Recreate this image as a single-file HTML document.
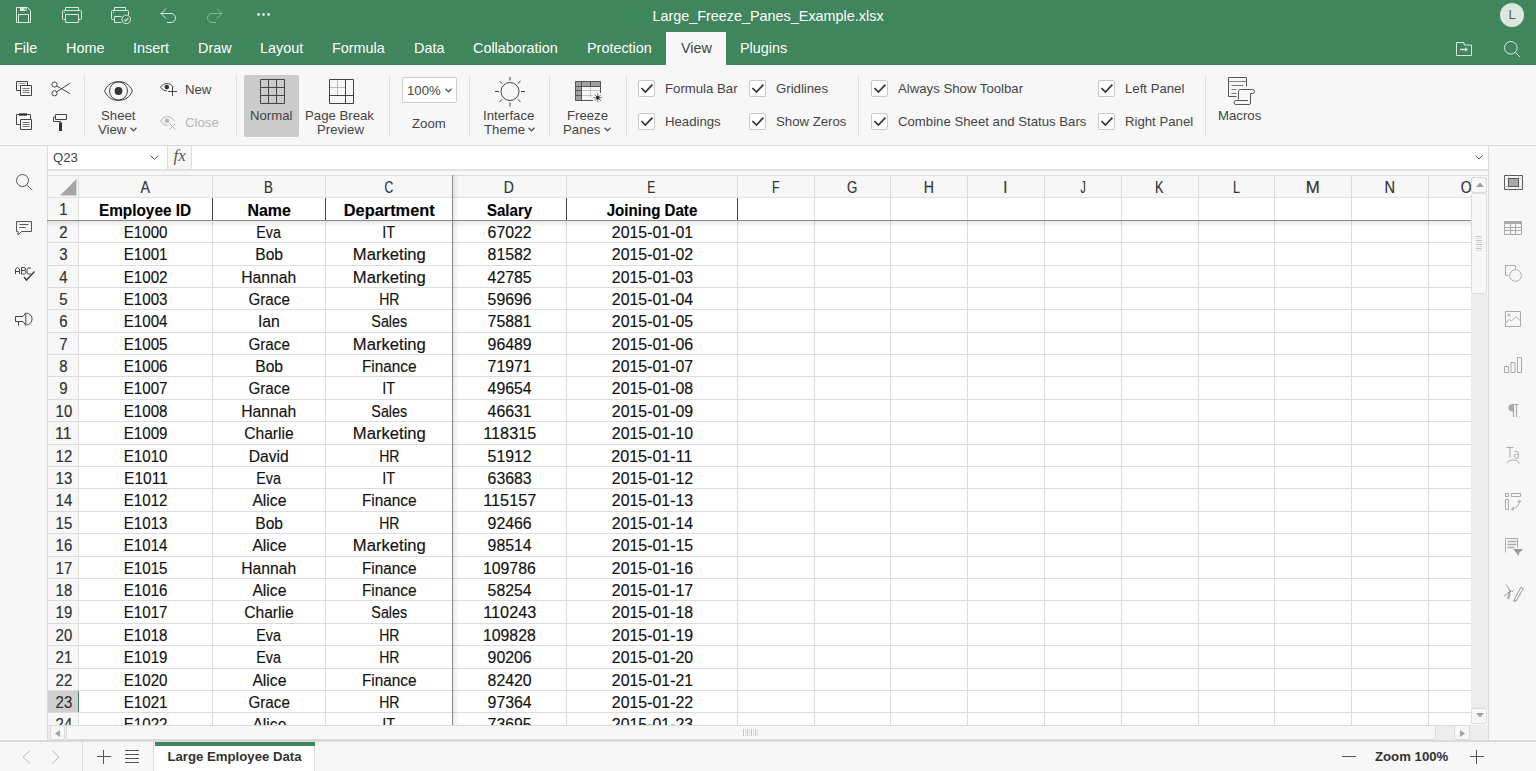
<!DOCTYPE html>
<html><head><meta charset="utf-8">
<style>
*{margin:0;padding:0;box-sizing:border-box}
html,body{width:1536px;height:771px;overflow:hidden;background:#f7f7f7;font-family:"Liberation Sans",sans-serif;color:#444}
.a{position:absolute}
.t{position:absolute;white-space:nowrap;font-size:13.2px;line-height:17px;color:#444}
.tab{position:absolute;white-space:nowrap;font-size:14.4px;line-height:18px;color:#fff;top:39px}
.sep{position:absolute;top:75px;width:1px;height:62px;background:#dfdfdf}
.cb{position:absolute;width:17px;height:17px;border:1px solid #c9c9c9;border-radius:2px;background:#fff}
.cb svg{position:absolute;left:1px;top:1px}
.hl{position:absolute;left:47px;width:1424px;height:1px;background:#dcdcdc}
.vl{position:absolute;top:175px;width:1px;height:550px;background:#dcdcdc}
.ct{position:absolute;width:120px;text-align:center;white-space:nowrap;font-size:17px;color:#111;-webkit-text-stroke:0.15px #111}
.ct span{display:inline-block}
.b{font-weight:bold;color:#000}
svg{position:absolute;overflow:visible}
</style></head><body>
<!-- header -->
<div class="a" style="left:0;top:0;width:1536px;height:65px;background:#40865c"></div>
<div class="a" style="left:666px;top:32px;width:60px;height:33px;background:#f7f7f7"></div>
<div class="t" style="left:0;width:1536px;text-align:center;top:7px;font-size:14.4px;line-height:18px;color:#fff">Large_Freeze_Panes_Example.xlsx</div>
<div class="tab" style="left:14px">File</div>
<div class="tab" style="left:66px">Home</div>
<div class="tab" style="left:133px">Insert</div>
<div class="tab" style="left:198px">Draw</div>
<div class="tab" style="left:260px">Layout</div>
<div class="tab" style="left:332px">Formula</div>
<div class="tab" style="left:414px">Data</div>
<div class="tab" style="left:473px">Collaboration</div>
<div class="tab" style="left:587px">Protection</div>
<div class="tab" style="left:681px;color:#444">View</div>
<div class="tab" style="left:740px">Plugins</div>
<!-- quick access icons -->
<svg style="left:16px;top:7px" width="16" height="16" viewBox="0 0 16 16" fill="none" stroke="rgba(255,255,255,0.8)"><path d="M0.5 0.5H11.5L14.5 3.5V15.5H0.5Z"/><path d="M2.5 15.5V7.5H12.5V15.5"/><path d="M4 0.5h6.5v3.5h-6.5z" fill="rgba(255,255,255,0.8)" stroke="none"/><path d="M9 1.2v2" stroke="#40865c"/></svg>
<svg style="left:62px;top:7px" width="20" height="16" viewBox="0 0 20 16" fill="none" stroke="rgba(255,255,255,0.8)"><path d="M3.5 3.5V0.5H16.5V3.5"/><path d="M3.5 12.5H1.5A1 1 0 0 1 0.5 11.5V4.5A1 1 0 0 1 1.5 3.5H18.5A1 1 0 0 1 19.5 4.5V11.5A1 1 0 0 1 18.5 12.5H16.5"/><path d="M3.5 7.5H16.5V15.5H3.5Z"/><circle cx="2.5" cy="5.5" r="0.5" fill="#fff" stroke="none"/></svg>
<svg style="left:111px;top:7px" width="20" height="17" viewBox="0 0 20 17" fill="none" stroke="rgba(255,255,255,0.8)"><path d="M3.5 3.5V0.5H14.5V3.5"/><path d="M3.5 12.5H1.5a1 1 0 0 1-1-1V4.5a1 1 0 0 1 1-1H16.5a1 1 0 0 1 1 1V8"/><path d="M10.5 9.5H3.5V15.5H10.5"/><circle cx="2.5" cy="5.5" r="0.5" fill="#fff" stroke="none"/><circle cx="15.2" cy="12.4" r="4.3"/><path d="M13.2 12.5l1.5 1.5 2.6-2.8" stroke-width="1.2"/></svg>
<svg style="left:160px;top:8px" width="16" height="16" viewBox="0 0 16 16" fill="none" stroke="rgba(255,255,255,0.8)"><path d="M6 0.5L1 5.5L6 10.5"/><path d="M1 5.5H11A4.5 4.5 0 0 1 11 14.5H7"/></svg>
<svg style="left:208px;top:8px" width="16" height="16" viewBox="0 0 16 16" fill="none" stroke="rgba(255,255,255,0.38)"><path d="M9 0.5L14 5.5L9 10.5"/><path d="M14 5.5H4A4.5 4.5 0 0 0 4 14.5H8"/></svg>
<svg style="left:257px;top:12px" width="14" height="5" viewBox="0 0 14 5" fill="rgba(255,255,255,0.85)"><circle cx="1.5" cy="2.5" r="1.4"/><circle cx="6.5" cy="2.5" r="1.4"/><circle cx="11.5" cy="2.5" r="1.4"/></svg>
<div class="a" style="left:1500px;top:3px;width:24px;height:24px;border-radius:12px;background:#dce7df;color:#4d5e53;font-size:13px;line-height:24px;text-align:center">L</div>
<svg style="left:1456px;top:42px" width="16" height="14" viewBox="0 0 16 14" fill="none" stroke="rgba(255,255,255,0.8)"><path d="M0.5 0.5h7.5v2.5h7.5v10.5h-15z"/><path d="M4 7.5h5" stroke-width="1.5"/><path d="M9 5.2l3 2.3-3 2.3z" fill="rgba(255,255,255,0.8)" stroke="none"/></svg>
<svg style="left:1504px;top:41px" width="17" height="17" viewBox="0 0 17 17" fill="none" stroke="rgba(255,255,255,0.8)"><circle cx="6.8" cy="6.8" r="6.3"/><path d="M11.3 11.3l4.8 4.8"/></svg>

<!-- toolbar -->
<div class="a" style="left:0;top:145px;width:1536px;height:1px;background:#dcdcdc"></div>
<div class="sep" style="left:84px"></div>
<div class="sep" style="left:236px"></div>
<div class="sep" style="left:389px"></div>
<div class="sep" style="left:469px"></div>
<div class="sep" style="left:549px"></div>
<div class="sep" style="left:626px"></div>
<div class="sep" style="left:858px"></div>
<div class="sep" style="left:1205px"></div>
<!-- copy -->
<svg style="left:16px;top:81px" width="17" height="16" viewBox="0 0 17 16" fill="none" stroke="#444"><path d="M4 9.5H0.5V0.5H11.5V4"/><path d="M2.5 2.5H9.5M2.5 4.5H3.5" stroke="#999"/><path d="M4.5 4.5H15.5V14.5H4.5Z"/><path d="M6.5 7.5H13.5M6.5 9.5H13.5M6.5 11.5H13.5" stroke="#777"/></svg>
<!-- paste -->
<svg style="left:16px;top:113px" width="17" height="17" viewBox="0 0 17 17" fill="none" stroke="#444"><path d="M4 11.5H0.5V1.5H14.5V6"/><path d="M3 0.3h8v2.4h-8z" fill="#333" stroke="none"/><path d="M4.5 6.5H15.5V16.5H4.5Z"/><path d="M6.5 9.5H13.5M6.5 11.5H13.5M6.5 13.5H13.5" stroke="#777"/></svg>
<!-- scissors -->
<svg style="left:51px;top:81px" width="20" height="15" viewBox="0 0 20 15" fill="none" stroke="#444"><circle cx="3.5" cy="3.5" r="2.6"/><circle cx="3.5" cy="12.3" r="2.6"/><path d="M5.8 5L19 12.7M5.8 10.8L19 2.2"/></svg>
<!-- format painter -->
<svg style="left:53px;top:114px" width="15" height="17" viewBox="0 0 15 17" fill="none" stroke="#444"><path d="M2.5 0.5H13.5V5.5H2.5Z"/><path d="M2.5 3H0.5V7.5H7.5V8.5"/><path d="M6 8.5h3v8.5h-3z" fill="#333" stroke="none"/></svg>
<!-- sheet view eye -->
<svg style="left:104px;top:81px" width="30" height="20" viewBox="0 0 30 20" fill="none" stroke="#444"><path d="M0.6 10C3 4 8 0.6 14.5 0.6S26 4 28.4 10C26 16 21 19.4 14.5 19.4S3 16 0.6 10z"/><circle cx="14.5" cy="10" r="9"/><circle cx="14.5" cy="10" r="3.9" fill="#333" stroke="none"/></svg>
<div class="t" style="left:101px;top:107px">Sheet</div>
<div class="t" style="left:98px;top:121px">View</div>
<svg style="left:130px;top:127px" width="7" height="5" viewBox="0 0 7 5" fill="none" stroke="#555" stroke-width="1.3"><path d="M0.5 0.8l3 3 3-3"/></svg>
<!-- new view -->
<svg style="left:160px;top:83px" width="18" height="14" viewBox="0 0 18 14" fill="none" stroke="#444"><path d="M0.5 4.2C2.3 1.8 4.5 0.5 7 0.5S11.7 1.8 13.5 4.2"/><path d="M0.5 4.2C2.3 6.6 4.5 7.9 7 7.9"/><circle cx="6.8" cy="4.1" r="2.3" fill="#333" stroke="none"/><path d="M12.5 4v9M8 8.5h9"/></svg>
<div class="t" style="left:185px;top:81px">New</div>
<svg style="left:160px;top:116px" width="18" height="14" viewBox="0 0 18 14" fill="none" stroke="#b5b5b5"><path d="M0.6 5C2.5 2 5 0.6 7.5 0.6S12.5 2 14.4 5"/><path d="M0.6 5C2.5 8 5 9.4 7.5 9.4"/><circle cx="7" cy="4.7" r="2.2" fill="#b5b5b5" stroke="none"/><path d="M9.5 7.5l6 6M15.5 7.5l-6 6"/></svg>
<div class="t" style="left:185px;top:114px;color:#b5b5b5">Close</div>
<!-- normal -->
<div class="a" style="left:244px;top:75px;width:55px;height:62px;background:#cbcbcb;border-radius:2px"></div>
<svg style="left:260px;top:79px" width="25" height="25" viewBox="0 0 25 25" fill="none" stroke="#444"><path d="M0.5 0.5h24v24h-24z"/><path d="M8.5 0.5v24M16.5 0.5v24M0.5 8.5h24M0.5 16.5h24"/></svg>
<div class="t" style="left:250px;top:107px">Normal</div>
<!-- page break -->
<svg style="left:329px;top:79px" width="25" height="25" viewBox="0 0 25 25" fill="none" stroke="#444"><path d="M8.5 0.5v16M0.5 8.5h16" stroke="#bbb"/><path d="M0.5 0.5h24v24h-24z"/><path d="M16.5 0.5v24M0.5 16.5h24"/></svg>
<div class="t" style="left:305px;top:107px">Page Break</div>
<div class="t" style="left:317px;top:121px">Preview</div>
<!-- zoom -->
<div class="a" style="left:402px;top:77px;width:55px;height:26px;background:#fff;border:1px solid #cfcfcf;border-radius:2px"></div>
<div class="t" style="left:407px;top:82px">100%</div>
<svg style="left:445px;top:88px" width="7" height="5" viewBox="0 0 7 5" fill="none" stroke="#555" stroke-width="1.3"><path d="M0.5 0.8l3 3 3-3"/></svg>
<div class="t" style="left:412px;top:115px">Zoom</div>
<!-- interface theme -->
<svg style="left:495px;top:77px" width="30" height="30" viewBox="0 0 30 30" fill="none" stroke="#444"><circle cx="15" cy="14.5" r="9"/><path d="M15 0v3.5M15 25.5v4M0 14.5h4M26 14.5h4M4.5 4l2.8 2.8M25.5 4l-2.8 2.8M4.5 25l2.8-2.8M25.5 25l-2.8-2.8"/></svg>
<div class="t" style="left:483px;top:107px">Interface</div>
<div class="t" style="left:484px;top:121px">Theme</div>
<svg style="left:528px;top:127px" width="7" height="5" viewBox="0 0 7 5" fill="none" stroke="#555" stroke-width="1.3"><path d="M0.5 0.8l3 3 3-3"/></svg>
<!-- freeze panes -->
<svg style="left:575px;top:81px" width="27" height="22" viewBox="0 0 27 22" fill="none" stroke="#444"><path d="M0.5 0.5H25.5V5.5H0.5Z" fill="#a0a0a0" stroke="none"/><path d="M0.5 5.5H6.5V19.5H0.5Z" fill="#a0a0a0" stroke="none"/><path d="M6.5 9.5H25M6.5 14.5H18M15.5 5.5V16" stroke="#c4c4c4"/><path d="M0.5 11V0.5H25.5V12M0.5 11V19.5H18M0.5 5.5H25.5M6.5 0.5V19.5M15.5 0.5V5.5M0.5 9.5H6.5M0.5 14.5H6.5" stroke="#555"/><path d="M22.8 12.3v9M18.3 16.8h9M19.6 13.6l6.4 6.4M26 13.6l-6.4 6.4" stroke="#777"/><circle cx="22.8" cy="16.8" r="1.8" fill="#222" stroke="none"/></svg>
<div class="t" style="left:567px;top:107px">Freeze</div>
<div class="t" style="left:563px;top:121px">Panes</div>
<svg style="left:604px;top:127px" width="7" height="5" viewBox="0 0 7 5" fill="none" stroke="#555" stroke-width="1.3"><path d="M0.5 0.8l3 3 3-3"/></svg>
<!-- checkboxes -->
<div class="cb" style="left:638px;top:80px"><svg width="15" height="15" viewBox="0 0 15 15" fill="none" stroke="#333" stroke-width="1.7"><path d="M1.4 6L5.4 10L12.4 2.6"/></svg></div>
<div class="t" style="left:665px;top:80px">Formula Bar</div>
<div class="cb" style="left:638px;top:113px"><svg width="15" height="15" viewBox="0 0 15 15" fill="none" stroke="#333" stroke-width="1.7"><path d="M1.4 6L5.4 10L12.4 2.6"/></svg></div>
<div class="t" style="left:665px;top:113px">Headings</div>
<div class="cb" style="left:749px;top:80px"><svg width="15" height="15" viewBox="0 0 15 15" fill="none" stroke="#333" stroke-width="1.7"><path d="M1.4 6L5.4 10L12.4 2.6"/></svg></div>
<div class="t" style="left:776px;top:80px">Gridlines</div>
<div class="cb" style="left:749px;top:113px"><svg width="15" height="15" viewBox="0 0 15 15" fill="none" stroke="#333" stroke-width="1.7"><path d="M1.4 6L5.4 10L12.4 2.6"/></svg></div>
<div class="t" style="left:776px;top:113px">Show Zeros</div>
<div class="cb" style="left:871px;top:80px"><svg width="15" height="15" viewBox="0 0 15 15" fill="none" stroke="#333" stroke-width="1.7"><path d="M1.4 6L5.4 10L12.4 2.6"/></svg></div>
<div class="t" style="left:898px;top:80px">Always Show Toolbar</div>
<div class="cb" style="left:871px;top:113px"><svg width="15" height="15" viewBox="0 0 15 15" fill="none" stroke="#333" stroke-width="1.7"><path d="M1.4 6L5.4 10L12.4 2.6"/></svg></div>
<div class="t" style="left:898px;top:113px">Combine Sheet and Status Bars</div>
<div class="cb" style="left:1098px;top:80px"><svg width="15" height="15" viewBox="0 0 15 15" fill="none" stroke="#333" stroke-width="1.7"><path d="M1.4 6L5.4 10L12.4 2.6"/></svg></div>
<div class="t" style="left:1125px;top:80px">Left Panel</div>
<div class="cb" style="left:1098px;top:113px"><svg width="15" height="15" viewBox="0 0 15 15" fill="none" stroke="#333" stroke-width="1.7"><path d="M1.4 6L5.4 10L12.4 2.6"/></svg></div>
<div class="t" style="left:1125px;top:113px">Right Panel</div>
<!-- macros -->
<svg style="left:1228px;top:77px" width="28" height="28" viewBox="0 0 28 28" fill="none" stroke="#555"><path d="M8.5 19.5h-8v-19h18v9"/><path d="M0.5 4.5h18" stroke="#888"/><path d="M3.5 8.5h12M3.5 12.5h5M3.5 16.5h5" stroke="#777"/><path d="M10.5 22.5v-8a2 2 0 0 1 2-2h12a2 2 0 0 1 0 4h-2v9.5a1.5 1.5 0 0 1-1.5 1.5h-13a2 2 0 0 1 0-4h12" fill="#f7f7f7"/></svg>
<div class="t" style="left:1218px;top:107px">Macros</div>


<!-- formula bar -->
<div class="a" style="left:47px;top:146px;width:1441px;height:23px;background:#fff"></div>
<div class="a" style="left:167px;top:146px;width:25px;height:23px;background:#f7f7f7;border-left:1px solid #dcdcdc;border-right:1px solid #dcdcdc"></div>
<div class="a" style="left:47px;top:169px;width:1441px;height:2px;background:#e2e2e2"></div>
<div class="t" style="left:53px;top:150px;line-height:16px">Q23</div>
<svg style="left:150px;top:155px" width="9" height="6" viewBox="0 0 9 6" fill="none" stroke="#555"><path d="M0.5 0.5l4 4 4-4"/></svg>
<div class="a" style="left:173.5px;top:146px;font-family:'Liberation Serif',serif;font-style:italic;font-size:17px;line-height:20px;color:#555">fx</div>
<svg style="left:1475px;top:155px" width="8" height="5" viewBox="0 0 8 5" fill="none" stroke="#555"><path d="M0.5 0.5l3.5 3.5 3.5-3.5"/></svg>

<!-- left panel -->
<div class="a" style="left:47px;top:146px;width:1px;height:595px;background:#dcdcdc"></div>
<svg style="left:16px;top:174px" width="17" height="17" viewBox="0 0 17 17" fill="none" stroke="#555"><circle cx="6.5" cy="6.5" r="6"/><path d="M10.8 10.8l5.5 5.5"/></svg>
<svg style="left:16px;top:221px" width="17" height="15" viewBox="0 0 17 15" fill="none" stroke="#555"><path d="M0.5 0.5h15v10h-10l-3.5 3.5v-3.5h-1.5z"/><path d="M3.5 3.5h9M3.5 6.5h6"/></svg>
<svg style="left:15px;top:267px" width="20" height="15" viewBox="0 0 20 15" fill="none" stroke="#444"><path d="M0.5 7v-5l2-1.5 2 1.5v5M0.5 4.5h4M6.5 7v-6.5h2.5a1.5 1.5 0 0 1 0 3h-2.5M6.5 3.5h3a1.8 1.8 0 0 1 0 3.5h-3M16 1h-2.5a1.5 1.5 0 0 0-1.5 1.5v3a1.5 1.5 0 0 0 1.5 1.5h2.5"/><path d="M9 10l2.5 3 8-8.5" stroke-width="1.5"/></svg>
<svg style="left:15px;top:312px" width="18" height="15" viewBox="0 0 18 15" fill="none" stroke="#444"><path d="M0.5 4.5H8L10.8 0.8V13.4L8 9.5H0.5Z"/><path d="M3.5 9.5V13.5"/><path d="M11.5 1.2A5.6 5.8 0 0 1 11.5 12.8" stroke="#555"/></svg>


<!-- grid -->
<div class="a" style="left:0;top:0;width:1488px;height:725px;overflow:hidden">
<div style="position:absolute;left:47px;top:175px;width:1424px;height:22px;background:#f7f7f7"></div>
<div style="position:absolute;left:47px;top:197px;width:31px;height:528px;background:#f7f7f7"></div>
<div style="position:absolute;left:79px;top:198px;width:1392px;height:527px;background:#fff"></div>
<div style="position:absolute;left:48px;top:691px;width:30px;height:21px;background:#cfcfcf"></div>
<div class="hl" style="top:242px"></div>
<div class="hl" style="top:265px"></div>
<div class="hl" style="top:287px"></div>
<div class="hl" style="top:309px"></div>
<div class="hl" style="top:332px"></div>
<div class="hl" style="top:354px"></div>
<div class="hl" style="top:376px"></div>
<div class="hl" style="top:399px"></div>
<div class="hl" style="top:421px"></div>
<div class="hl" style="top:444px"></div>
<div class="hl" style="top:466px"></div>
<div class="hl" style="top:488px"></div>
<div class="hl" style="top:511px"></div>
<div class="hl" style="top:533px"></div>
<div class="hl" style="top:556px"></div>
<div class="hl" style="top:578px"></div>
<div class="hl" style="top:600px"></div>
<div class="hl" style="top:623px"></div>
<div class="hl" style="top:645px"></div>
<div class="hl" style="top:668px"></div>
<div class="hl" style="top:690px"></div>
<div class="hl" style="top:712px"></div>
<div style="position:absolute;left:47px;top:175px;width:1441px;height:1px;background:#dedede"></div>
<div style="position:absolute;left:47px;top:197px;width:1424px;height:1px;background:#e0e0e0"></div>
<div class="vl" style="left:78px"></div>
<div class="vl" style="left:212px"></div>
<div class="vl" style="left:325px"></div>
<div class="vl" style="left:566px"></div>
<div class="vl" style="left:737px"></div>
<div class="vl" style="left:814px"></div>
<div class="vl" style="left:890px"></div>
<div class="vl" style="left:967px"></div>
<div class="vl" style="left:1044px"></div>
<div class="vl" style="left:1121px"></div>
<div class="vl" style="left:1198px"></div>
<div class="vl" style="left:1274px"></div>
<div class="vl" style="left:1351px"></div>
<div class="vl" style="left:1428px"></div>
<div style="position:absolute;left:47px;top:175px;width:1px;height:550px;background:#dcdcdc"></div>
<div style="position:absolute;left:78px;top:691px;width:1px;height:21px;background:#40865c"></div>
<div style="position:absolute;left:212px;top:198px;width:1px;height:22px;background:#444"></div>
<div style="position:absolute;left:325px;top:198px;width:1px;height:22px;background:#444"></div>
<div style="position:absolute;left:566px;top:198px;width:1px;height:22px;background:#444"></div>
<div style="position:absolute;left:737px;top:198px;width:1px;height:22px;background:#444"></div>
<div style="position:absolute;left:47px;top:221px;width:1424px;height:6px;background:linear-gradient(rgba(0,0,0,0.09),rgba(0,0,0,0))"></div>
<div style="position:absolute;left:453px;top:175px;width:6px;height:550px;background:linear-gradient(90deg,rgba(0,0,0,0.09),rgba(0,0,0,0))"></div>
<div style="position:absolute;left:47px;top:220px;width:1424px;height:1px;background:#8a8a8a"></div>
<div style="position:absolute;left:452px;top:175px;width:1px;height:550px;background:#8a8a8a"></div>
<svg style="left:60px;top:179px" width="17" height="17" viewBox="0 0 17 17"><path d="M0 16.5L16.5 0V16.5z" fill="#a5a5a5"/></svg>
<div class="ct" style="left:85.00px;top:177px;height:21px;line-height:21px;color:#333;font-size:16px"><span style="transform:scaleX(0.888)">A</span></div>
<div class="ct" style="left:208.50px;top:177px;height:21px;line-height:21px;color:#333;font-size:16px"><span style="transform:scaleX(0.835)">B</span></div>
<div class="ct" style="left:328.50px;top:177px;height:21px;line-height:21px;color:#333;font-size:16px"><span style="transform:scaleX(0.756)">C</span></div>
<div class="ct" style="left:449.00px;top:177px;height:21px;line-height:21px;color:#333;font-size:16px"><span style="transform:scaleX(0.872)">D</span></div>
<div class="ct" style="left:591.50px;top:177px;height:21px;line-height:21px;color:#333;font-size:16px"><span style="transform:scaleX(0.749)">E</span></div>
<div class="ct" style="left:715.50px;top:177px;height:21px;line-height:21px;color:#333;font-size:16px"><span style="transform:scaleX(0.770)">F</span></div>
<div class="ct" style="left:792.00px;top:177px;height:21px;line-height:21px;color:#333;font-size:16px"><span style="transform:scaleX(0.830)">G</span></div>
<div class="ct" style="left:868.50px;top:177px;height:21px;line-height:21px;color:#333;font-size:16px"><span style="transform:scaleX(0.883)">H</span></div>
<div class="ct" style="left:945.50px;top:177px;height:21px;line-height:21px;color:#333;font-size:16px"><span style="transform:scaleX(0.928)">I</span></div>
<div class="ct" style="left:1022.50px;top:177px;height:21px;line-height:21px;color:#333;font-size:16px"><span style="transform:scaleX(0.653)">J</span></div>
<div class="ct" style="left:1099.50px;top:177px;height:21px;line-height:21px;color:#333;font-size:16px"><span style="transform:scaleX(0.797)">K</span></div>
<div class="ct" style="left:1176.00px;top:177px;height:21px;line-height:21px;color:#333;font-size:16px"><span style="transform:scaleX(0.774)">L</span></div>
<div class="ct" style="left:1252.50px;top:177px;height:21px;line-height:21px;color:#333;font-size:16px"><span style="transform:scaleX(1.051)">M</span></div>
<div class="ct" style="left:1329.50px;top:177px;height:21px;line-height:21px;color:#333;font-size:16px"><span style="transform:scaleX(0.915)">N</span></div>
<div class="ct" style="left:1406.50px;top:177px;height:21px;line-height:21px;color:#333;font-size:16px"><span style="transform:scaleX(0.871)">O</span></div>
<div class="ct" style="left:3.50px;top:199px;height:22px;line-height:22px;color:#333;font-size:16px"><span style="transform:scaleX(0.933)">1</span></div>
<div class="ct" style="left:3.50px;top:222px;height:22px;line-height:22px;color:#333;font-size:16px"><span style="transform:scaleX(0.933)">2</span></div>
<div class="ct" style="left:3.50px;top:244px;height:22px;line-height:22px;color:#333;font-size:16px"><span style="transform:scaleX(0.933)">3</span></div>
<div class="ct" style="left:3.50px;top:267px;height:22px;line-height:22px;color:#333;font-size:16px"><span style="transform:scaleX(0.933)">4</span></div>
<div class="ct" style="left:3.50px;top:289px;height:22px;line-height:22px;color:#333;font-size:16px"><span style="transform:scaleX(0.933)">5</span></div>
<div class="ct" style="left:3.50px;top:311px;height:22px;line-height:22px;color:#333;font-size:16px"><span style="transform:scaleX(0.933)">6</span></div>
<div class="ct" style="left:3.50px;top:334px;height:22px;line-height:22px;color:#333;font-size:16px"><span style="transform:scaleX(0.933)">7</span></div>
<div class="ct" style="left:3.50px;top:356px;height:22px;line-height:22px;color:#333;font-size:16px"><span style="transform:scaleX(0.933)">8</span></div>
<div class="ct" style="left:3.50px;top:378px;height:22px;line-height:22px;color:#333;font-size:16px"><span style="transform:scaleX(0.933)">9</span></div>
<div class="ct" style="left:3.50px;top:401px;height:22px;line-height:22px;color:#333;font-size:16px"><span style="transform:scaleX(0.933)">10</span></div>
<div class="ct" style="left:3.50px;top:423px;height:22px;line-height:22px;color:#333;font-size:16px"><span style="transform:scaleX(0.999)">11</span></div>
<div class="ct" style="left:3.50px;top:446px;height:22px;line-height:22px;color:#333;font-size:16px"><span style="transform:scaleX(0.933)">12</span></div>
<div class="ct" style="left:3.50px;top:468px;height:22px;line-height:22px;color:#333;font-size:16px"><span style="transform:scaleX(0.933)">13</span></div>
<div class="ct" style="left:3.50px;top:490px;height:22px;line-height:22px;color:#333;font-size:16px"><span style="transform:scaleX(0.933)">14</span></div>
<div class="ct" style="left:3.50px;top:513px;height:22px;line-height:22px;color:#333;font-size:16px"><span style="transform:scaleX(0.933)">15</span></div>
<div class="ct" style="left:3.50px;top:535px;height:22px;line-height:22px;color:#333;font-size:16px"><span style="transform:scaleX(0.933)">16</span></div>
<div class="ct" style="left:3.50px;top:558px;height:22px;line-height:22px;color:#333;font-size:16px"><span style="transform:scaleX(0.933)">17</span></div>
<div class="ct" style="left:3.50px;top:580px;height:22px;line-height:22px;color:#333;font-size:16px"><span style="transform:scaleX(0.933)">18</span></div>
<div class="ct" style="left:3.50px;top:602px;height:22px;line-height:22px;color:#333;font-size:16px"><span style="transform:scaleX(0.933)">19</span></div>
<div class="ct" style="left:3.50px;top:625px;height:22px;line-height:22px;color:#333;font-size:16px"><span style="transform:scaleX(0.933)">20</span></div>
<div class="ct" style="left:3.50px;top:647px;height:22px;line-height:22px;color:#333;font-size:16px"><span style="transform:scaleX(0.933)">21</span></div>
<div class="ct" style="left:3.50px;top:670px;height:22px;line-height:22px;color:#333;font-size:16px"><span style="transform:scaleX(0.933)">22</span></div>
<div class="ct" style="left:3.50px;top:692px;height:22px;line-height:22px;color:#333;font-size:16px"><span style="transform:scaleX(0.933)">23</span></div>
<div class="ct" style="left:3.50px;top:714px;height:22px;line-height:22px;color:#333;font-size:16px"><span style="transform:scaleX(0.933)">24</span></div>
<div class="ct b" style="left:85.50px;top:200px;height:22px;line-height:22px"><span style="transform:scaleX(0.903)">Employee ID</span></div>
<div class="ct b" style="left:209.00px;top:200px;height:22px;line-height:22px"><span style="transform:scaleX(0.937)">Name</span></div>
<div class="ct b" style="left:329.00px;top:200px;height:22px;line-height:22px"><span style="transform:scaleX(0.962)">Department</span></div>
<div class="ct b" style="left:449.50px;top:200px;height:22px;line-height:22px"><span style="transform:scaleX(0.886)">Salary</span></div>
<div class="ct b" style="left:592.00px;top:200px;height:22px;line-height:22px"><span style="transform:scaleX(0.888)">Joining Date</span></div>
<div class="ct" style="left:85.50px;top:222px;height:22px;line-height:22px"><span style="transform:scaleX(0.890)">E1000</span></div>
<div class="ct" style="left:209.00px;top:222px;height:22px;line-height:22px"><span style="transform:scaleX(0.843)">Eva</span></div>
<div class="ct" style="left:329.00px;top:222px;height:22px;line-height:22px"><span style="transform:scaleX(0.851)">IT</span></div>
<div class="ct" style="left:449.50px;top:222px;height:22px;line-height:22px"><span style="transform:scaleX(0.933)">67022</span></div>
<div class="ct" style="left:592.00px;top:222px;height:22px;line-height:22px"><span style="transform:scaleX(0.934)">2015-01-01</span></div>
<div class="ct" style="left:85.50px;top:244px;height:22px;line-height:22px"><span style="transform:scaleX(0.890)">E1001</span></div>
<div class="ct" style="left:209.00px;top:244px;height:22px;line-height:22px"><span style="transform:scaleX(0.918)">Bob</span></div>
<div class="ct" style="left:329.00px;top:244px;height:22px;line-height:22px"><span style="transform:scaleX(0.978)">Marketing</span></div>
<div class="ct" style="left:449.50px;top:244px;height:22px;line-height:22px"><span style="transform:scaleX(0.933)">81582</span></div>
<div class="ct" style="left:592.00px;top:244px;height:22px;line-height:22px"><span style="transform:scaleX(0.934)">2015-01-02</span></div>
<div class="ct" style="left:85.50px;top:267px;height:22px;line-height:22px"><span style="transform:scaleX(0.890)">E1002</span></div>
<div class="ct" style="left:209.00px;top:267px;height:22px;line-height:22px"><span style="transform:scaleX(0.923)">Hannah</span></div>
<div class="ct" style="left:329.00px;top:267px;height:22px;line-height:22px"><span style="transform:scaleX(0.978)">Marketing</span></div>
<div class="ct" style="left:449.50px;top:267px;height:22px;line-height:22px"><span style="transform:scaleX(0.933)">42785</span></div>
<div class="ct" style="left:592.00px;top:267px;height:22px;line-height:22px"><span style="transform:scaleX(0.934)">2015-01-03</span></div>
<div class="ct" style="left:85.50px;top:289px;height:22px;line-height:22px"><span style="transform:scaleX(0.890)">E1003</span></div>
<div class="ct" style="left:209.00px;top:289px;height:22px;line-height:22px"><span style="transform:scaleX(0.894)">Grace</span></div>
<div class="ct" style="left:329.00px;top:289px;height:22px;line-height:22px"><span style="transform:scaleX(0.826)">HR</span></div>
<div class="ct" style="left:449.50px;top:289px;height:22px;line-height:22px"><span style="transform:scaleX(0.933)">59696</span></div>
<div class="ct" style="left:592.00px;top:289px;height:22px;line-height:22px"><span style="transform:scaleX(0.934)">2015-01-04</span></div>
<div class="ct" style="left:85.50px;top:311px;height:22px;line-height:22px"><span style="transform:scaleX(0.890)">E1004</span></div>
<div class="ct" style="left:209.00px;top:311px;height:22px;line-height:22px"><span style="transform:scaleX(0.925)">Ian</span></div>
<div class="ct" style="left:329.00px;top:311px;height:22px;line-height:22px"><span style="transform:scaleX(0.842)">Sales</span></div>
<div class="ct" style="left:449.50px;top:311px;height:22px;line-height:22px"><span style="transform:scaleX(0.933)">75881</span></div>
<div class="ct" style="left:592.00px;top:311px;height:22px;line-height:22px"><span style="transform:scaleX(0.934)">2015-01-05</span></div>
<div class="ct" style="left:85.50px;top:334px;height:22px;line-height:22px"><span style="transform:scaleX(0.890)">E1005</span></div>
<div class="ct" style="left:209.00px;top:334px;height:22px;line-height:22px"><span style="transform:scaleX(0.894)">Grace</span></div>
<div class="ct" style="left:329.00px;top:334px;height:22px;line-height:22px"><span style="transform:scaleX(0.978)">Marketing</span></div>
<div class="ct" style="left:449.50px;top:334px;height:22px;line-height:22px"><span style="transform:scaleX(0.933)">96489</span></div>
<div class="ct" style="left:592.00px;top:334px;height:22px;line-height:22px"><span style="transform:scaleX(0.934)">2015-01-06</span></div>
<div class="ct" style="left:85.50px;top:356px;height:22px;line-height:22px"><span style="transform:scaleX(0.890)">E1006</span></div>
<div class="ct" style="left:209.00px;top:356px;height:22px;line-height:22px"><span style="transform:scaleX(0.918)">Bob</span></div>
<div class="ct" style="left:329.00px;top:356px;height:22px;line-height:22px"><span style="transform:scaleX(0.903)">Finance</span></div>
<div class="ct" style="left:449.50px;top:356px;height:22px;line-height:22px"><span style="transform:scaleX(0.933)">71971</span></div>
<div class="ct" style="left:592.00px;top:356px;height:22px;line-height:22px"><span style="transform:scaleX(0.934)">2015-01-07</span></div>
<div class="ct" style="left:85.50px;top:378px;height:22px;line-height:22px"><span style="transform:scaleX(0.890)">E1007</span></div>
<div class="ct" style="left:209.00px;top:378px;height:22px;line-height:22px"><span style="transform:scaleX(0.894)">Grace</span></div>
<div class="ct" style="left:329.00px;top:378px;height:22px;line-height:22px"><span style="transform:scaleX(0.851)">IT</span></div>
<div class="ct" style="left:449.50px;top:378px;height:22px;line-height:22px"><span style="transform:scaleX(0.933)">49654</span></div>
<div class="ct" style="left:592.00px;top:378px;height:22px;line-height:22px"><span style="transform:scaleX(0.934)">2015-01-08</span></div>
<div class="ct" style="left:85.50px;top:401px;height:22px;line-height:22px"><span style="transform:scaleX(0.890)">E1008</span></div>
<div class="ct" style="left:209.00px;top:401px;height:22px;line-height:22px"><span style="transform:scaleX(0.923)">Hannah</span></div>
<div class="ct" style="left:329.00px;top:401px;height:22px;line-height:22px"><span style="transform:scaleX(0.842)">Sales</span></div>
<div class="ct" style="left:449.50px;top:401px;height:22px;line-height:22px"><span style="transform:scaleX(0.933)">46631</span></div>
<div class="ct" style="left:592.00px;top:401px;height:22px;line-height:22px"><span style="transform:scaleX(0.934)">2015-01-09</span></div>
<div class="ct" style="left:85.50px;top:423px;height:22px;line-height:22px"><span style="transform:scaleX(0.890)">E1009</span></div>
<div class="ct" style="left:209.00px;top:423px;height:22px;line-height:22px"><span style="transform:scaleX(0.918)">Charlie</span></div>
<div class="ct" style="left:329.00px;top:423px;height:22px;line-height:22px"><span style="transform:scaleX(0.978)">Marketing</span></div>
<div class="ct" style="left:449.50px;top:423px;height:22px;line-height:22px"><span style="transform:scaleX(0.954)">118315</span></div>
<div class="ct" style="left:592.00px;top:423px;height:22px;line-height:22px"><span style="transform:scaleX(0.934)">2015-01-10</span></div>
<div class="ct" style="left:85.50px;top:446px;height:22px;line-height:22px"><span style="transform:scaleX(0.890)">E1010</span></div>
<div class="ct" style="left:209.00px;top:446px;height:22px;line-height:22px"><span style="transform:scaleX(0.921)">David</span></div>
<div class="ct" style="left:329.00px;top:446px;height:22px;line-height:22px"><span style="transform:scaleX(0.826)">HR</span></div>
<div class="ct" style="left:449.50px;top:446px;height:22px;line-height:22px"><span style="transform:scaleX(0.933)">51912</span></div>
<div class="ct" style="left:592.00px;top:446px;height:22px;line-height:22px"><span style="transform:scaleX(0.948)">2015-01-11</span></div>
<div class="ct" style="left:85.50px;top:468px;height:22px;line-height:22px"><span style="transform:scaleX(0.914)">E1011</span></div>
<div class="ct" style="left:209.00px;top:468px;height:22px;line-height:22px"><span style="transform:scaleX(0.843)">Eva</span></div>
<div class="ct" style="left:329.00px;top:468px;height:22px;line-height:22px"><span style="transform:scaleX(0.851)">IT</span></div>
<div class="ct" style="left:449.50px;top:468px;height:22px;line-height:22px"><span style="transform:scaleX(0.933)">63683</span></div>
<div class="ct" style="left:592.00px;top:468px;height:22px;line-height:22px"><span style="transform:scaleX(0.934)">2015-01-12</span></div>
<div class="ct" style="left:85.50px;top:490px;height:22px;line-height:22px"><span style="transform:scaleX(0.890)">E1012</span></div>
<div class="ct" style="left:209.00px;top:490px;height:22px;line-height:22px"><span style="transform:scaleX(0.925)">Alice</span></div>
<div class="ct" style="left:329.00px;top:490px;height:22px;line-height:22px"><span style="transform:scaleX(0.903)">Finance</span></div>
<div class="ct" style="left:449.50px;top:490px;height:22px;line-height:22px"><span style="transform:scaleX(0.954)">115157</span></div>
<div class="ct" style="left:592.00px;top:490px;height:22px;line-height:22px"><span style="transform:scaleX(0.934)">2015-01-13</span></div>
<div class="ct" style="left:85.50px;top:513px;height:22px;line-height:22px"><span style="transform:scaleX(0.890)">E1013</span></div>
<div class="ct" style="left:209.00px;top:513px;height:22px;line-height:22px"><span style="transform:scaleX(0.918)">Bob</span></div>
<div class="ct" style="left:329.00px;top:513px;height:22px;line-height:22px"><span style="transform:scaleX(0.826)">HR</span></div>
<div class="ct" style="left:449.50px;top:513px;height:22px;line-height:22px"><span style="transform:scaleX(0.933)">92466</span></div>
<div class="ct" style="left:592.00px;top:513px;height:22px;line-height:22px"><span style="transform:scaleX(0.934)">2015-01-14</span></div>
<div class="ct" style="left:85.50px;top:535px;height:22px;line-height:22px"><span style="transform:scaleX(0.890)">E1014</span></div>
<div class="ct" style="left:209.00px;top:535px;height:22px;line-height:22px"><span style="transform:scaleX(0.925)">Alice</span></div>
<div class="ct" style="left:329.00px;top:535px;height:22px;line-height:22px"><span style="transform:scaleX(0.978)">Marketing</span></div>
<div class="ct" style="left:449.50px;top:535px;height:22px;line-height:22px"><span style="transform:scaleX(0.933)">98514</span></div>
<div class="ct" style="left:592.00px;top:535px;height:22px;line-height:22px"><span style="transform:scaleX(0.934)">2015-01-15</span></div>
<div class="ct" style="left:85.50px;top:558px;height:22px;line-height:22px"><span style="transform:scaleX(0.890)">E1015</span></div>
<div class="ct" style="left:209.00px;top:558px;height:22px;line-height:22px"><span style="transform:scaleX(0.923)">Hannah</span></div>
<div class="ct" style="left:329.00px;top:558px;height:22px;line-height:22px"><span style="transform:scaleX(0.903)">Finance</span></div>
<div class="ct" style="left:449.50px;top:558px;height:22px;line-height:22px"><span style="transform:scaleX(0.933)">109786</span></div>
<div class="ct" style="left:592.00px;top:558px;height:22px;line-height:22px"><span style="transform:scaleX(0.934)">2015-01-16</span></div>
<div class="ct" style="left:85.50px;top:580px;height:22px;line-height:22px"><span style="transform:scaleX(0.890)">E1016</span></div>
<div class="ct" style="left:209.00px;top:580px;height:22px;line-height:22px"><span style="transform:scaleX(0.925)">Alice</span></div>
<div class="ct" style="left:329.00px;top:580px;height:22px;line-height:22px"><span style="transform:scaleX(0.903)">Finance</span></div>
<div class="ct" style="left:449.50px;top:580px;height:22px;line-height:22px"><span style="transform:scaleX(0.933)">58254</span></div>
<div class="ct" style="left:592.00px;top:580px;height:22px;line-height:22px"><span style="transform:scaleX(0.934)">2015-01-17</span></div>
<div class="ct" style="left:85.50px;top:602px;height:22px;line-height:22px"><span style="transform:scaleX(0.890)">E1017</span></div>
<div class="ct" style="left:209.00px;top:602px;height:22px;line-height:22px"><span style="transform:scaleX(0.918)">Charlie</span></div>
<div class="ct" style="left:329.00px;top:602px;height:22px;line-height:22px"><span style="transform:scaleX(0.842)">Sales</span></div>
<div class="ct" style="left:449.50px;top:602px;height:22px;line-height:22px"><span style="transform:scaleX(0.954)">110243</span></div>
<div class="ct" style="left:592.00px;top:602px;height:22px;line-height:22px"><span style="transform:scaleX(0.934)">2015-01-18</span></div>
<div class="ct" style="left:85.50px;top:625px;height:22px;line-height:22px"><span style="transform:scaleX(0.890)">E1018</span></div>
<div class="ct" style="left:209.00px;top:625px;height:22px;line-height:22px"><span style="transform:scaleX(0.843)">Eva</span></div>
<div class="ct" style="left:329.00px;top:625px;height:22px;line-height:22px"><span style="transform:scaleX(0.826)">HR</span></div>
<div class="ct" style="left:449.50px;top:625px;height:22px;line-height:22px"><span style="transform:scaleX(0.933)">109828</span></div>
<div class="ct" style="left:592.00px;top:625px;height:22px;line-height:22px"><span style="transform:scaleX(0.934)">2015-01-19</span></div>
<div class="ct" style="left:85.50px;top:647px;height:22px;line-height:22px"><span style="transform:scaleX(0.890)">E1019</span></div>
<div class="ct" style="left:209.00px;top:647px;height:22px;line-height:22px"><span style="transform:scaleX(0.843)">Eva</span></div>
<div class="ct" style="left:329.00px;top:647px;height:22px;line-height:22px"><span style="transform:scaleX(0.826)">HR</span></div>
<div class="ct" style="left:449.50px;top:647px;height:22px;line-height:22px"><span style="transform:scaleX(0.933)">90206</span></div>
<div class="ct" style="left:592.00px;top:647px;height:22px;line-height:22px"><span style="transform:scaleX(0.934)">2015-01-20</span></div>
<div class="ct" style="left:85.50px;top:670px;height:22px;line-height:22px"><span style="transform:scaleX(0.890)">E1020</span></div>
<div class="ct" style="left:209.00px;top:670px;height:22px;line-height:22px"><span style="transform:scaleX(0.925)">Alice</span></div>
<div class="ct" style="left:329.00px;top:670px;height:22px;line-height:22px"><span style="transform:scaleX(0.903)">Finance</span></div>
<div class="ct" style="left:449.50px;top:670px;height:22px;line-height:22px"><span style="transform:scaleX(0.933)">82420</span></div>
<div class="ct" style="left:592.00px;top:670px;height:22px;line-height:22px"><span style="transform:scaleX(0.934)">2015-01-21</span></div>
<div class="ct" style="left:85.50px;top:692px;height:22px;line-height:22px"><span style="transform:scaleX(0.890)">E1021</span></div>
<div class="ct" style="left:209.00px;top:692px;height:22px;line-height:22px"><span style="transform:scaleX(0.894)">Grace</span></div>
<div class="ct" style="left:329.00px;top:692px;height:22px;line-height:22px"><span style="transform:scaleX(0.826)">HR</span></div>
<div class="ct" style="left:449.50px;top:692px;height:22px;line-height:22px"><span style="transform:scaleX(0.933)">97364</span></div>
<div class="ct" style="left:592.00px;top:692px;height:22px;line-height:22px"><span style="transform:scaleX(0.934)">2015-01-22</span></div>
<div class="ct" style="left:85.50px;top:714px;height:22px;line-height:22px"><span style="transform:scaleX(0.890)">E1022</span></div>
<div class="ct" style="left:209.00px;top:714px;height:22px;line-height:22px"><span style="transform:scaleX(0.925)">Alice</span></div>
<div class="ct" style="left:329.00px;top:714px;height:22px;line-height:22px"><span style="transform:scaleX(0.851)">IT</span></div>
<div class="ct" style="left:449.50px;top:714px;height:22px;line-height:22px"><span style="transform:scaleX(0.933)">73695</span></div>
<div class="ct" style="left:592.00px;top:714px;height:22px;line-height:22px"><span style="transform:scaleX(0.934)">2015-01-23</span></div>
</div>

<!-- vertical scrollbar -->
<div class="a" style="left:1471px;top:176px;width:17px;height:549px;background:#f7f7f7"></div>
<div class="a" style="left:1471px;top:294px;width:17px;height:414px;background:#ededed"></div>
<div class="a" style="left:1471px;top:177px;width:16px;height:16px;border:1px solid #dcdcdc;border-radius:2px;background:#f7f7f7"></div>
<svg style="left:1476px;top:182px" width="8" height="5" viewBox="0 0 8 5" fill="#a0a0a0"><path d="M0 5l4-4.5 4 4.5z"/></svg>
<div class="a" style="left:1471px;top:193px;width:16px;height:101px;border:1px solid #dcdcdc;border-radius:2px;background:#f7f7f7"></div>
<svg style="left:1476px;top:236px" width="7" height="15" viewBox="0 0 7 15" stroke="#c4c4c4"><path d="M0 0.5h6M0 4.5h6M0 8.5h6M0 12.5h6"/><path d="M0 2.5h6M0 6.5h6M0 10.5h6M0 14.5h6" stroke="#dedede"/></svg>
<div class="a" style="left:1471px;top:708px;width:16px;height:16px;border:1px solid #dcdcdc;border-radius:2px;background:#f7f7f7"></div>
<svg style="left:1476px;top:713px" width="8" height="5" viewBox="0 0 8 5" fill="#a0a0a0"><path d="M0 0l4 4.5 4-4.5z"/></svg>

<!-- horizontal scrollbar -->
<div class="a" style="left:48px;top:725px;width:1440px;height:16px;background:#ededed"></div>
<div class="a" style="left:48px;top:725px;width:1423px;height:1px;background:#dcdcdc"></div>
<div class="a" style="left:50px;top:725px;width:15px;height:15px;border:1px solid #dcdcdc;border-radius:2px;background:#f7f7f7"></div>
<svg style="left:55px;top:730px" width="5" height="7" viewBox="0 0 5 7" fill="#a0a0a0"><path d="M5 0l-5 3.5 5 3.5z"/></svg>
<div class="a" style="left:66px;top:725px;width:1370px;height:15px;border:1px solid #dcdcdc;border-radius:2px;background:#f7f7f7"></div>
<svg style="left:743px;top:729px" width="16" height="8" viewBox="0 0 16 8" stroke="#c4c4c4"><path d="M0.5 0v7M4.5 0v7M8.5 0v7M12.5 0v7"/><path d="M2.5 0v7M6.5 0v7M10.5 0v7M14.5 0v7" stroke="#dedede"/></svg>
<div class="a" style="left:1454px;top:725px;width:16px;height:15px;border:1px solid #dcdcdc;border-radius:2px;background:#f7f7f7"></div>
<svg style="left:1460px;top:730px" width="5" height="7" viewBox="0 0 5 7" fill="#a0a0a0"><path d="M0 0l5 3.5-5 3.5z"/></svg>

<!-- right panel -->
<div class="a" style="left:1488px;top:146px;width:1px;height:595px;background:#dcdcdc"></div>
<svg style="left:1504px;top:175px" width="19" height="15" viewBox="0 0 19 15" fill="none" stroke="#555"><path d="M0.5 0.5h18v14h-18z"/><path d="M4.5 0.5v14M14.5 0.5v14M0.5 3.5h18M0.5 11.5h18" stroke="#ccc"/><path d="M4.5 3.5h10v8h-10z" fill="#aaa"/></svg>
<svg style="left:1504px;top:221px" width="18" height="14" viewBox="0 0 18 14" fill="none" stroke="#aaa"><path d="M0.5 0.5h17v13h-17z"/><path d="M0.5 1.5h17M0.5 2.5h17" /><path d="M6.5 3v10M11.5 3v10M0.5 6.5h17M0.5 9.5h17"/></svg>
<svg style="left:1505px;top:265px" width="17" height="17" viewBox="0 0 17 17" fill="none" stroke="#aaa"><path d="M3.5 10.5h-3v-10h10v3"/><circle cx="10.5" cy="10.5" r="5.8"/></svg>
<svg style="left:1505px;top:311px" width="16" height="16" viewBox="0 0 16 16" fill="none" stroke="#aaa"><path d="M0.5 0.5h15v15h-15z"/><path d="M0.5 12l4-3.5 2 1.5 4.5-4.5 4.5 4.5"/><circle cx="4" cy="4" r="1"/></svg>
<svg style="left:1504px;top:357px" width="18" height="16" viewBox="0 0 18 16" fill="none" stroke="#aaa"><path d="M0.5 9.5h4v6h-4zM7 5.5h4v10h-4zM13.5 0.5h4v15h-4z"/></svg>
<svg style="left:1508px;top:404px" width="11" height="13" viewBox="0 0 11 13" fill="none" stroke="#aaa"><path d="M5 0.5h5.5M5.5 0.5v12.5M8.5 0.5v12.5" stroke-width="1.2"/><path d="M5.5 0.5h-1.5a3.2 3.2 0 0 0 0 6.5h1.5z" fill="#aaa"/></svg>
<svg style="left:1506px;top:447px" width="14" height="17" viewBox="0 0 14 17" fill="none" stroke="#aaa"><path d="M0.5 0.5h7M4 0.5v10"/><path d="M12.5 10.5v-4a2 2 0 0 0-2-2h-2M12.5 8a2.2 2.2 0 1 0 0 2.5"/><path d="M1 16.5a6 3.5 0 0 1 12 0"/></svg>
<svg style="left:1505px;top:493px" width="17" height="18" viewBox="0 0 17 18" fill="none" stroke="#aaa"><path d="M0.5 0.5h3v3h-3zM6.5 0.5h9v3h-9zM0.5 6.5h3v10h-3z"/><path d="M6.5 16a8 8 0 0 0 8-8.5M12.5 9.5l2-2.5 2 2.5M6.5 16l2.5-2M6.5 16l2.5 1.5"/></svg>
<svg style="left:1505px;top:538px" width="18" height="18" viewBox="0 0 18 18" fill="none" stroke="#aaa"><path d="M0.5 14.5v-14h12v9"/><path d="M2.5 3.5h9M2.5 6.5h9M2.5 9.5h7" stroke-width="1.5"/><path d="M8 11h10l-4 4v3z" fill="#999" stroke="none"/></svg>
<svg style="left:1503px;top:583px" width="21" height="20" viewBox="0 0 21 20" fill="none" stroke="#999"><path d="M3.3 1.7C5 4 7 6.5 6.8 10.5C6.6 14.5 5.2 18 5 15C4.8 12 6.5 9 8.2 7.8L10.3 9"/><path d="M0.9 13.3L8 7.5"/><path d="M11.2 16.6L17.8 4.3L20.2 5.7L13.4 17.6Z"/><path d="M11.2 16.6L10.8 18.5L13.4 17.6"/></svg>


<!-- status bar -->
<div class="a" style="left:0;top:740px;width:1536px;height:2px;background:#d9d9d9"></div>
<div class="a" style="left:82px;top:742px;width:1px;height:29px;background:#dcdcdc"></div>
<div class="a" style="left:153px;top:742px;width:1px;height:29px;background:#dcdcdc"></div>
<div class="a" style="left:154px;top:742px;width:161px;height:29px;background:#fff;border-right:1px solid #dcdcdc"></div>
<div class="a" style="left:155px;top:742px;width:160px;height:4px;background:#40865c"></div>
<div class="t" style="left:154px;width:161px;text-align:center;top:748px;font-weight:bold;color:#333">Large Employee Data</div>
<svg style="left:22px;top:750px" width="9" height="14" viewBox="0 0 9 14" fill="none" stroke="#bbb"><path d="M8 0.5l-7 6.5 7 6.5"/></svg>
<svg style="left:51px;top:750px" width="9" height="14" viewBox="0 0 9 14" fill="none" stroke="#bbb"><path d="M1 0.5l7 6.5-7 6.5"/></svg>
<svg style="left:97px;top:750px" width="14" height="14" viewBox="0 0 14 14" fill="none" stroke="#555"><path d="M6.5 0v14M0 6.5h14"/></svg>
<svg style="left:125px;top:750px" width="14" height="13" viewBox="0 0 14 13" fill="none" stroke="#555"><path d="M0 0.5h14M0 4.5h14M0 8.5h14M0 12.5h14"/></svg>
<svg style="left:1342px;top:756px" width="14" height="2" viewBox="0 0 14 2" stroke="#555"><path d="M0 0.5h14"/></svg>
<div class="t" style="left:1375px;top:748px;font-weight:bold;color:#333">Zoom 100%</div>
<svg style="left:1470px;top:750px" width="14" height="14" viewBox="0 0 14 14" fill="none" stroke="#555"><path d="M6.5 0v14M0 6.5h14"/></svg>

</body></html>
